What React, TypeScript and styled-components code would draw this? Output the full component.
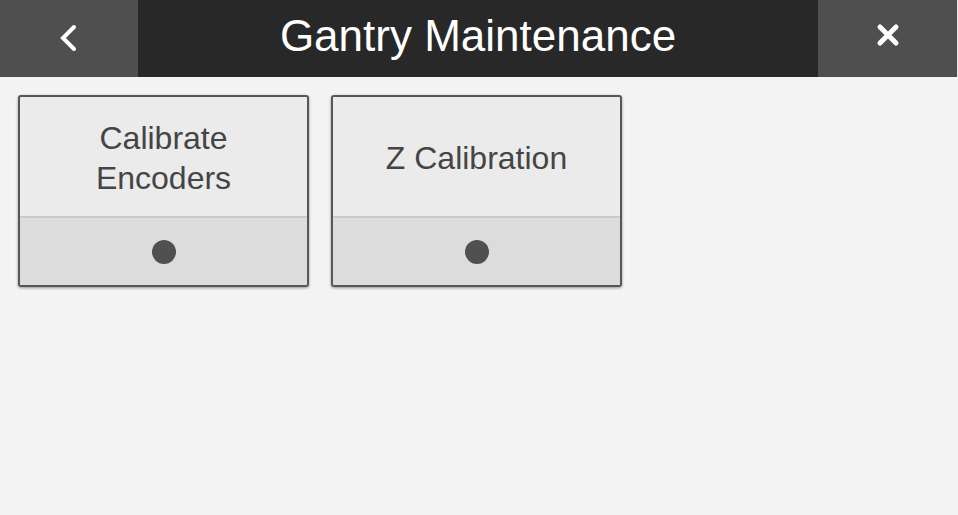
import React from "react";
import styled, { createGlobalStyle } from "styled-components";

const Global = createGlobalStyle`
  html, body { margin: 0; padding: 0; }
  body {
    background: #f4f4f4;
    font-family: "Liberation Sans", Arial, Helvetica, sans-serif;
    width: 958px;
    height: 515px;
    overflow: hidden;
  }
`;

const Page = styled.div`
  display: flex;
  flex-direction: column;
  width: 958px;
  height: 515px;
  background: #f4f4f4;
`;

const Header = styled.header`
  display: grid;
  grid-template-columns: 138px 1fr 139px 1px;
  height: 77px;
  background: #282828;
`;

const NavButton = styled.button<{ $shift?: number }>`
  display: flex;
  align-items: center;
  justify-content: center;
  border: 0;
  padding: 0 0 ${(p) => p.$shift ?? 0}px 0;
  margin: 0;
  background: #4f4f4f;
  cursor: pointer;
`;

const Edge = styled.div`
  background: #e8e8e8;
`;

const Title = styled.h1`
  margin: 0;
  display: flex;
  align-items: center;
  justify-content: center;
  color: #ffffff;
  font-weight: 400;
  font-size: 44px;
  padding-bottom: 5px;
`;

const Grid = styled.div`
  display: flex;
  gap: 22px;
  padding: 18px 18px;
`;

const Card = styled.div`
  width: 291px;
  height: 192px;
  box-sizing: border-box;
  border: 2px solid #575757;
  border-radius: 3px;
  display: grid;
  grid-template-rows: 1fr 69px;
  overflow: hidden;
  box-shadow: 0 1px 3px rgba(0, 0, 0, 0.4);
  background: #ebebeb;
`;

const CardLabel = styled.div`
  display: flex;
  align-items: center;
  justify-content: center;
  text-align: center;
  color: #454545;
  font-size: 32px;
  line-height: 40px;
  padding-top: 2px;
`;

const CardFooter = styled.div`
  display: flex;
  align-items: center;
  justify-content: center;
  background: #dcdcdc;
  border-top: 2px solid #c9c9c9;
`;

const Dot = styled.span`
  width: 24px;
  height: 24px;
  border-radius: 50%;
  background: #505050;
`;

const cards = [
  { id: "enc", label: ["Calibrate", "Encoders"] },
  { id: "z", label: ["Z Calibration"] },
];

export default function App() {
  return (
    <Page>
      <Global />
      <Header>
        <NavButton aria-label="Back" $shift={2}>
          <svg width="26" height="34" viewBox="0 0 26 34">
            <path d="M18 6 L7 17 L18 28" fill="none" stroke="#ffffff" strokeWidth="4" strokeLinecap="round" strokeLinejoin="miter" />
          </svg>
        </NavButton>
        <Title>Gantry Maintenance</Title>
        <NavButton aria-label="Close" $shift={8}>
          <svg width="26" height="26" viewBox="0 0 26 26">
            <path d="M5 5 L21 21 M21 5 L5 21" fill="none" stroke="#ffffff" strokeWidth="5" strokeLinecap="round" />
          </svg>
        </NavButton>
        <Edge />
      </Header>
      <Grid>
        {cards.map((c) => (
          <Card key={c.id}>
            <CardLabel>
              <span>
                {c.label.map((l, i) => (
                  <React.Fragment key={i}>
                    {i > 0 && <br />}
                    {l}
                  </React.Fragment>
                ))}
              </span>
            </CardLabel>
            <CardFooter>
              <Dot />
            </CardFooter>
          </Card>
        ))}
      </Grid>
    </Page>
  );
}
